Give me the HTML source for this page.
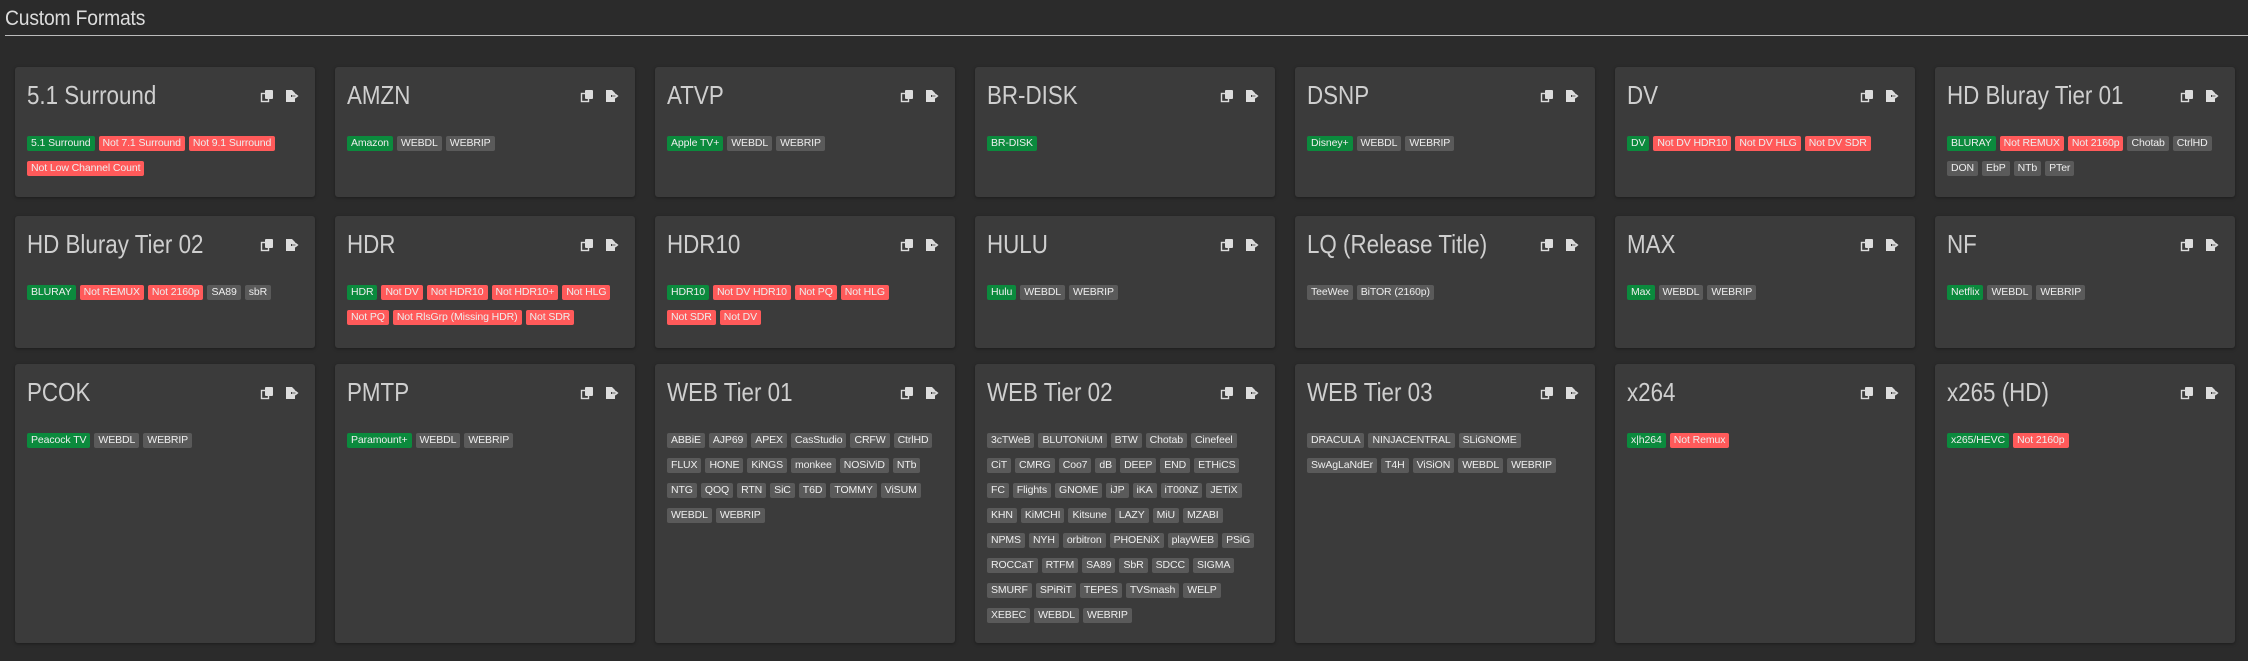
<!DOCTYPE html>
<html><head><meta charset="utf-8"><style>
*{box-sizing:border-box;margin:0;padding:0}
body{width:2248px;height:661px;background:#2b2b2b;font-family:"Liberation Sans",sans-serif;color:#e6e6e6;position:relative;overflow:hidden}
h1{position:absolute;left:5px;top:7px;font-weight:normal;font-size:21px;color:#dcdcdc;letter-spacing:-0.2px;transform:scaleX(0.92);transform-origin:left}
.line{position:absolute;left:5px;right:0;top:35px;height:1px;background:#bbb}
.card{position:absolute;width:300px;background:#3b3b3b;border-radius:3px;box-shadow:0 1px 3px rgba(0,0,0,.35);padding:0 12px}
.t{position:absolute;left:12px;top:13px;font-size:26px;font-weight:normal;color:#cfcfcf;white-space:nowrap;transform:scaleX(0.86);transform-origin:left}
.ic{position:absolute;top:22px;width:14px;height:14px}
.b{position:absolute;left:12px;right:0;top:69px}
.row{display:flex;gap:4px;height:25px;white-space:nowrap}
.b span{display:inline-block;height:15px;line-height:15px;font-size:10.5px;padding:0 4px;border-radius:2px;background:#5a5a5a;color:#eee;white-space:nowrap;letter-spacing:-0.1px}
.b .g{background:#0b8a3d}
.b .r{background:#ff5a5a}
</style></head><body>
<h1>Custom Formats</h1><div class="line"></div>
<div id="c"></div>
<script>
const G='g',R='r',N='',B=['|'];
const L=s=>s.split(" ").map(x=>x=='|'?B:[N,x]);
const cards=[
["5.1 Surround",[[G,"5.1 Surround"],[R,"Not 7.1 Surround"],[R,"Not 9.1 Surround"],B,[R,"Not Low Channel Count"]]],
["AMZN",[[G,"Amazon"],[N,"WEBDL"],[N,"WEBRIP"]]],
["ATVP",[[G,"Apple TV+"],[N,"WEBDL"],[N,"WEBRIP"]]],
["BR-DISK",[[G,"BR-DISK"]]],
["DSNP",[[G,"Disney+"],[N,"WEBDL"],[N,"WEBRIP"]]],
["DV",[[G,"DV"],[R,"Not DV HDR10"],[R,"Not DV HLG"],[R,"Not DV SDR"]]],
["HD Bluray Tier 01",[[G,"BLURAY"],[R,"Not REMUX"],[R,"Not 2160p"],[N,"Chotab"],[N,"CtrlHD"],B,[N,"DON"],[N,"EbP"],[N,"NTb"],[N,"PTer"]]],
["HD Bluray Tier 02",[[G,"BLURAY"],[R,"Not REMUX"],[R,"Not 2160p"],[N,"SA89"],[N,"sbR"]]],
["HDR",[[G,"HDR"],[R,"Not DV"],[R,"Not HDR10"],[R,"Not HDR10+"],[R,"Not HLG"],B,[R,"Not PQ"],[R,"Not RlsGrp (Missing HDR)"],[R,"Not SDR"]]],
["HDR10",[[G,"HDR10"],[R,"Not DV HDR10"],[R,"Not PQ"],[R,"Not HLG"],B,[R,"Not SDR"],[R,"Not DV"]]],
["HULU",[[G,"Hulu"],[N,"WEBDL"],[N,"WEBRIP"]]],
["LQ (Release Title)",[[N,"TeeWee"],[N,"BiTOR (2160p)"]]],
["MAX",[[G,"Max"],[N,"WEBDL"],[N,"WEBRIP"]]],
["NF",[[G,"Netflix"],[N,"WEBDL"],[N,"WEBRIP"]]],
["PCOK",[[G,"Peacock TV"],[N,"WEBDL"],[N,"WEBRIP"]]],
["PMTP",[[G,"Paramount+"],[N,"WEBDL"],[N,"WEBRIP"]]],
["WEB Tier 01",L("ABBiE AJP69 APEX CasStudio CRFW CtrlHD | FLUX HONE KiNGS monkee NOSiViD NTb | NTG QOQ RTN SiC T6D TOMMY ViSUM | WEBDL WEBRIP")],
["WEB Tier 02",L("3cTWeB BLUTONiUM BTW Chotab Cinefeel | CiT CMRG Coo7 dB DEEP END ETHiCS | FC Flights GNOME iJP iKA iT00NZ JETiX | KHN KiMCHI Kitsune LAZY MiU MZABI | NPMS NYH orbitron PHOENiX playWEB PSiG | ROCCaT RTFM SA89 SbR SDCC SIGMA | SMURF SPiRiT TEPES TVSmash WELP | XEBEC WEBDL WEBRIP")],
["WEB Tier 03",L("DRACULA NINJACENTRAL SLiGNOME | SwAgLaNdEr T4H ViSiON WEBDL WEBRIP")],
["x264",[[G,"x|h264"],[R,"Not Remux"]]],
["x265 (HD)",[[G,"x265/HEVC"],[R,"Not 2160p"]]]
];
const rows=[[67,130],[216,132],[364,279]];
const copy='<svg class="ic" style="left:245px" viewBox="0 0 14 14"><rect x="1.5" y="4.5" width="7" height="8" fill="none" stroke="#ddd" stroke-width="1.4"/><rect x="5" y="1" width="8" height="9" rx="1" fill="#ddd"/></svg>';
const exp='<svg class="ic" style="left:270px" viewBox="0 0 14 14"><path d="M1 1h6l3 3v2H6v2h4v5H1z" fill="#ddd"/><path d="M7 7h5M10 5l2.5 2L10 9" stroke="#ddd" stroke-width="1.3" fill="none"/></svg>';
let h='';
cards.forEach((c,i)=>{const r=Math.floor(i/7),col=i%7;
let inner='<div class="row">';
c[1].forEach(b=>{inner+=b[0]=='|'?'</div><div class="row">':`<span class="${b[0]}">${b[1]}</span>`;});
inner+='</div>';
h+=`<div class="card" style="left:${15+col*320}px;top:${rows[r][0]}px;height:${rows[r][1]}px"><div class="t">${c[0]}</div>${copy}${exp}<div class="b">${inner}</div></div>`;});
document.getElementById('c').innerHTML=h;
</script>
</body></html>
